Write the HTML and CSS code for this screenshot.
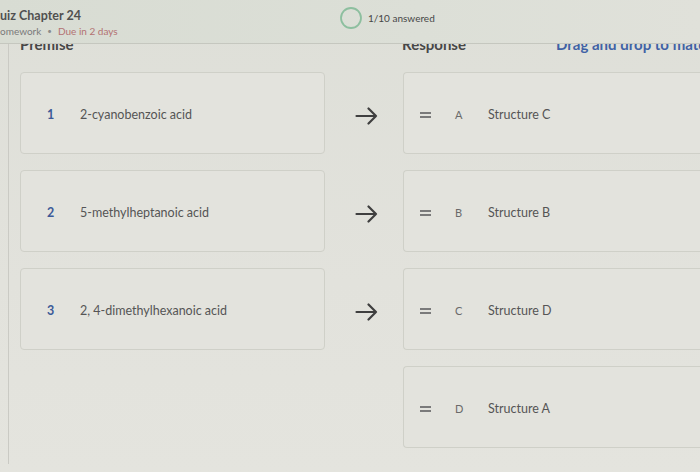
FILE: index.html
```html
<!DOCTYPE html>
<html>
<head>
<meta charset="utf-8">
<link rel="stylesheet" href="styles.css">
</head>
<body>
<header class="top">
  <div class="title-block">
    <div class="title">uiz Chapter 24</div>
    <div class="sub"><span>omework</span><span class="dot">•</span><span class="due">Due in 2 days</span></div>
  </div>
  <div class="progress">
    <svg width="24" height="24" viewBox="0 0 24 24"><circle cx="12" cy="12" r="10" fill="none" stroke="#8dbf9f" stroke-width="1.8"/></svg>
    <span>1/10 answered</span>
  </div>
</header>
<main class="main">
  <div class="labels">
    <div class="lab premise">Premise</div>
    <div class="lab response">Response</div>
    <div class="lab drag">Drag and drop to match</div>
  </div>
  <div class="grid">
    <div class="card left"><span class="num">1</span><span class="txt">2-cyanobenzoic acid</span></div>
    <div class="arrow"><svg width="23" height="18" viewBox="0 0 23 18"><path d="M1.5 9 H21 M13.5 1.5 L21 9 L13.5 16.5" fill="none" stroke="#3f3f3f" stroke-width="2.2" stroke-linecap="round" stroke-linejoin="round"/></svg></div>
    <div class="card right"><span class="eq"></span><span class="let">A</span><span class="txt">Structure C</span></div>

    <div class="card left"><span class="num">2</span><span class="txt">5-methylheptanoic acid</span></div>
    <div class="arrow"><svg width="23" height="18" viewBox="0 0 23 18"><path d="M1.5 9 H21 M13.5 1.5 L21 9 L13.5 16.5" fill="none" stroke="#3f3f3f" stroke-width="2.2" stroke-linecap="round" stroke-linejoin="round"/></svg></div>
    <div class="card right"><span class="eq"></span><span class="let">B</span><span class="txt">Structure B</span></div>

    <div class="card left"><span class="num">3</span><span class="txt">2, 4-dimethylhexanoic acid</span></div>
    <div class="arrow"><svg width="23" height="18" viewBox="0 0 23 18"><path d="M1.5 9 H21 M13.5 1.5 L21 9 L13.5 16.5" fill="none" stroke="#3f3f3f" stroke-width="2.2" stroke-linecap="round" stroke-linejoin="round"/></svg></div>
    <div class="card right"><span class="eq"></span><span class="let">C</span><span class="txt">Structure D</span></div>

    <div class="empty"></div>
    <div class="empty"></div>
    <div class="card right"><span class="eq"></span><span class="let">D</span><span class="txt">Structure A</span></div>
  </div>
</main>
</body>
</html>
```

FILE: styles.css
```css
html, body {
  margin: 0;
  padding: 0;
  width: 700px;
  height: 472px;
  overflow: hidden;
  background: linear-gradient(180deg, #dedfd8 0%, #e2e2dc 60%, #e4e4de 100%);
  font-family: Lato, "Open Sans", sans-serif;
}

.top {
  position: relative;
  z-index: 2;
  height: 44px;
  background: linear-gradient(90deg, #d8dcd3 0%, #dcdfd7 60%, #e0e1da 100%);
  border-bottom: 1px solid #c5c7bf;
  display: flex;
  align-items: flex-start;
  box-sizing: border-box;
}

.title-block {
  width: 339px;
  padding-top: 8px;
}

.title {
  font-size: 12.5px;
  font-weight: 700;
  color: #505050;
  line-height: 16px;
}

.sub {
  font-size: 10px;
  color: #7a7a7a;
  line-height: 14px;
  display: flex;
  gap: 6px;
}

.dot {
  color: #8a8a8a;
  font-size: 8px;
}

.due {
  color: #b37272;
}

.progress {
  display: flex;
  align-items: center;
  gap: 5px;
  padding-top: 6px;
  font-size: 10px;
  color: #474747;
}

.main {
  margin-left: 8px;
  border-left: 1px solid #cacac4;
  height: 430px;
}

.labels {
  position: relative;
  z-index: 1;
  margin-top: -10px;
  height: 20px;
  display: flex;
  font-size: 15px;
  font-weight: 700;
  line-height: 20px;
  color: #474747;
  white-space: nowrap;
  overflow: hidden;
}

.lab {
  flex-shrink: 0;
}

.premise {
  margin-left: 11px;
  width: 382px;
}

.response {
  width: 154px;
}

.drag {
  color: #3f62a5;
}

.grid {
  margin-top: 18px;
  margin-left: 11px;
  display: grid;
  grid-template-columns: 305px 78px 320px;
  grid-auto-rows: 82px;
  row-gap: 16px;
}

.card {
  border: 1px solid #cfd0c8;
  border-radius: 4px;
  background: #e3e3dd;
  display: flex;
  align-items: center;
  box-sizing: border-box;
  padding-top: 3px;
}

.left {
  padding-left: 26px;
}

.num {
  font-size: 12.5px;
  font-weight: 700;
  color: #3c5a98;
  width: 33px;
}

.txt {
  font-size: 12.5px;
  color: #555;
}

.arrow {
  display: flex;
  align-items: center;
  padding-left: 30px;
  padding-top: 6px;
}

.right {
  padding-left: 16px;
  border-right: none;
  border-radius: 4px 0 0 4px;
}

.eq {
  width: 11px;
  height: 6px;
  border-top: 2px solid #7a7a7a;
  border-bottom: 2px solid #7a7a7a;
  box-sizing: border-box;
  margin-right: 24px;
}

.let {
  font-size: 11px;
  color: #6a6a6a;
  width: 33px;
}
```
